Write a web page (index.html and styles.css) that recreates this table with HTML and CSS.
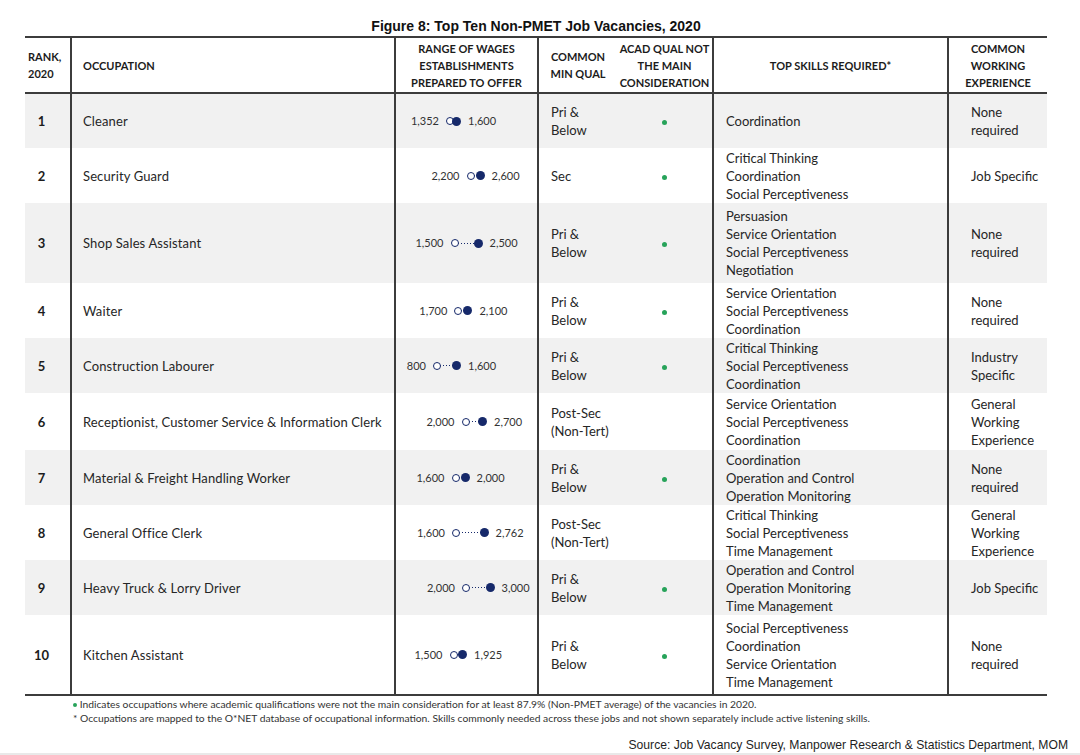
FILE: index.html
```html
<!DOCTYPE html>
<html lang="en">
<head>
<meta charset="utf-8">
<title>Figure 8: Top Ten Non-PMET Job Vacancies, 2020</title>
<link rel="stylesheet" href="styles.css">
</head>
<body>
<div class="page">
  <div class="title">Figure 8: Top Ten Non-PMET Job Vacancies, 2020</div>
  <table class="jobs">
    <colgroup>
      <col class="c-rank"><col class="c-occ"><col class="c-wage"><col class="c-minq"><col class="c-acad"><col class="c-skill"><col class="c-exp">
    </colgroup>
    <thead>
      <tr class="hrow">
        <th class="h-rank">RANK,<br>2020</th>
        <th class="h-occ bl">OCCUPATION</th>
        <th class="h-c bl">RANGE OF WAGES<br>ESTABLISHMENTS<br>PREPARED TO OFFER</th>
        <th class="h-c bl">COMMON<br>MIN QUAL</th>
        <th class="h-c">ACAD QUAL NOT<br>THE MAIN<br>CONSIDERATION</th>
        <th class="h-c bl">TOP SKILLS REQUIRED*</th>
        <th class="h-c bl">COMMON<br>WORKING<br>EXPERIENCE</th>
      </tr>
    </thead>
    <tbody>
      <tr class="shade h54">
        <td class="rank">1</td>
        <td class="occ bl">Cleaner</td>
        <td class="wage bl"><div class="dumb"><span class="lo" style="width:54px">1,352</span><span class="seg" style="width:6.5px"></span><span class="hi">1,600</span></div></td>
        <td class="minq bl">Pri &amp;<br>Below</td>
        <td class="acad"><span class="ok"></span></td>
        <td class="skill bl">Coordination</td>
        <td class="exp bl">None<br>required</td>
      </tr>
      <tr class="h55">
        <td class="rank">2</td>
        <td class="occ bl">Security Guard</td>
        <td class="wage bl"><div class="dumb"><span class="lo" style="width:74.5px">2,200</span><span class="seg" style="width:9.5px"></span><span class="hi">2,600</span></div></td>
        <td class="minq bl">Sec</td>
        <td class="acad"><span class="ok"></span></td>
        <td class="skill bl">Critical Thinking<br>Coordination<br>Social Perceptiveness</td>
        <td class="exp bl">Job Specific</td>
      </tr>
      <tr class="shade h80">
        <td class="rank">3</td>
        <td class="occ bl">Shop Sales Assistant</td>
        <td class="wage bl"><div class="dumb"><span class="lo" style="width:58.5px">1,500</span><span class="seg" style="width:23.5px"></span><span class="hi">2,500</span></div></td>
        <td class="minq bl">Pri &amp;<br>Below</td>
        <td class="acad"><span class="ok"></span></td>
        <td class="skill bl">Persuasion<br>Service Orientation<br>Social Perceptiveness<br>Negotiation</td>
        <td class="exp bl">None<br>required</td>
      </tr>
      <tr class="h55">
        <td class="rank">4</td>
        <td class="occ bl">Waiter</td>
        <td class="wage bl"><div class="dumb"><span class="lo" style="width:62.4px">1,700</span><span class="seg" style="width:9.5px"></span><span class="hi">2,100</span></div></td>
        <td class="minq bl">Pri &amp;<br>Below</td>
        <td class="acad"><span class="ok"></span></td>
        <td class="skill bl">Service Orientation<br>Social Perceptiveness<br>Coordination</td>
        <td class="exp bl">None<br>required</td>
      </tr>
      <tr class="shade h55">
        <td class="rank">5</td>
        <td class="occ bl">Construction Labourer</td>
        <td class="wage bl"><div class="dumb"><span class="lo" style="width:41px">800</span><span class="seg" style="width:19.5px"></span><span class="hi">1,600</span></div></td>
        <td class="minq bl">Pri &amp;<br>Below</td>
        <td class="acad"><span class="ok"></span></td>
        <td class="skill bl">Critical Thinking<br>Social Perceptiveness<br>Coordination</td>
        <td class="exp bl">Industry<br>Specific</td>
      </tr>
      <tr class="h57">
        <td class="rank">6</td>
        <td class="occ bl">Receptionist, Customer Service &amp; Information Clerk</td>
        <td class="wage bl"><div class="dumb"><span class="lo" style="width:69.5px">2,000</span><span class="seg" style="width:17px"></span><span class="hi">2,700</span></div></td>
        <td class="minq bl">Post-Sec<br>(Non-Tert)</td>
        <td class="acad"></td>
        <td class="skill bl">Service Orientation<br>Social Perceptiveness<br>Coordination</td>
        <td class="exp bl">General<br>Working<br>Experience</td>
      </tr>
      <tr class="shade h55">
        <td class="rank">7</td>
        <td class="occ bl">Material &amp; Freight Handling Worker</td>
        <td class="wage bl"><div class="dumb"><span class="lo" style="width:59.5px">1,600</span><span class="seg" style="width:9.5px"></span><span class="hi">2,000</span></div></td>
        <td class="minq bl">Pri &amp;<br>Below</td>
        <td class="acad"><span class="ok"></span></td>
        <td class="skill bl">Coordination<br>Operation and Control<br>Operation Monitoring</td>
        <td class="exp bl">None<br>required</td>
      </tr>
      <tr class="h55">
        <td class="rank">8</td>
        <td class="occ bl">General Office Clerk</td>
        <td class="wage bl"><div class="dumb"><span class="lo" style="width:60px">1,600</span><span class="seg" style="width:28px"></span><span class="hi">2,762</span></div></td>
        <td class="minq bl">Post-Sec<br>(Non-Tert)</td>
        <td class="acad"></td>
        <td class="skill bl">Critical Thinking<br>Social Perceptiveness<br>Time Management</td>
        <td class="exp bl">General<br>Working<br>Experience</td>
      </tr>
      <tr class="shade h55">
        <td class="rank">9</td>
        <td class="occ bl">Heavy Truck &amp; Lorry Driver</td>
        <td class="wage bl"><div class="dumb"><span class="lo" style="width:70px">2,000</span><span class="seg" style="width:24px"></span><span class="hi">3,000</span></div></td>
        <td class="minq bl">Pri &amp;<br>Below</td>
        <td class="acad"><span class="ok"></span></td>
        <td class="skill bl">Operation and Control<br>Operation Monitoring<br>Time Management</td>
        <td class="exp bl">Job Specific</td>
      </tr>
      <tr class="h81 last">
        <td class="rank">10</td>
        <td class="occ bl">Kitchen Assistant</td>
        <td class="wage bl"><div class="dumb"><span class="lo" style="width:57.5px">1,500</span><span class="seg" style="width:9px"></span><span class="hi">1,925</span></div></td>
        <td class="minq bl">Pri &amp;<br>Below</td>
        <td class="acad"><span class="ok"></span></td>
        <td class="skill bl">Social Perceptiveness<br>Coordination<br>Service Orientation<br>Time Management</td>
        <td class="exp bl">None<br>required</td>
      </tr>
    </tbody>
  </table>
  <div class="notes">
    <p class="note"><span class="ok small"></span> Indicates occupations where academic qualifications were not the main consideration for at least 87.9% (Non-PMET average) of the vacancies in 2020.</p>
    <p class="note">* Occupations are mapped to the O*NET database of occupational information. Skills commonly needed across these jobs and not shown separately include active listening skills.</p>
  </div>
  <div class="source">Source: Job Vacancy Survey, Manpower Research &amp; Statistics Department, MOM</div>
</div>
<div class="edge"></div>
</body>
</html>
```

FILE: styles.css
```css
html, body {
  margin: 0;
  padding: 0;
  background: #ffffff;
}

body {
  font-family: Lato, "Open Sans", "Noto Sans", sans-serif;
  color: #262626;
  width: 1080px;
  height: 755px;
  overflow: hidden;
  position: relative;
}

.page {
  padding: 18px 0 0 25px;
}

.title {
  width: 1022px;
  height: 16px;
  margin-bottom: 2px;
  text-align: center;
  font-family: "Liberation Sans", Arial, sans-serif;
  font-weight: 700;
  font-size: 14px;
  line-height: 16px;
  color: #111111;
}

.jobs {
  width: 1022px;
  table-layout: fixed;
  border-collapse: separate;
  border-spacing: 0;
}

.c-rank { width: 45px; }
.c-occ { width: 324px; }
.c-wage { width: 143px; }
.c-minq { width: 80px; }
.c-acad { width: 95px; }
.c-skill { width: 235px; }
.c-exp { width: 100px; }

.jobs th,
.jobs td {
  box-sizing: border-box;
  padding: 0;
  vertical-align: middle;
}

.jobs th {
  border-top: 2px solid #3c3c3c;
  border-bottom: 2px solid #3c3c3c;
  font-weight: 700;
  font-size: 11px;
  line-height: 17px;
  color: #1c1c1c;
  white-space: nowrap;
}

.jobs .bl {
  border-left: 2px solid #3c3c3c;
}

.hrow { height: 58px; }
.h54 { height: 54px; }
.h55 { height: 55px; }
.h57 { height: 57px; }
.h80 { height: 80px; }
.h81 { height: 81px; }

.last td {
  border-bottom: 2px solid #3c3c3c;
}

.shade td {
  background: #f1f1f1;
}

.h-rank {
  text-align: left;
  padding-left: 3px !important;
}

.h-occ {
  text-align: left;
  padding-left: 11px !important;
}

.h-c {
  text-align: center;
}

.jobs td {
  font-size: 13px;
  line-height: 18px;
}

.rank {
  text-align: center;
  padding-right: 12px !important;
  font-weight: 700;
  font-size: 11.5px;
  color: #1c1c1c;
}

.occ {
  padding-left: 11px !important;
  letter-spacing: 0.12px;
}

.minq {
  padding-left: 12px !important;
}

.acad {
  text-align: center;
}

.skill {
  padding-left: 12px !important;
}

.exp {
  padding-left: 22px !important;
}

.ok {
  display: inline-block;
  width: 5px;
  height: 5px;
  border-radius: 50%;
  background: #27a35a;
  vertical-align: middle;
}

/* dumbbell */
.dumb {
  display: flex;
  align-items: center;
  font-size: 11px;
  line-height: 14px;
  color: #333333;
}

.lo {
  flex: none;
  box-sizing: border-box;
  text-align: right;
  padding-right: 11px;
}

.seg {
  flex: none;
  position: relative;
  height: 9px;
  background-image: repeating-linear-gradient(90deg, #16296a 0 1px, transparent 1px 3px);
  background-size: 100% 1px;
  background-position: 0 4px;
  background-repeat: no-repeat;
}

.seg::before {
  content: "";
  position: absolute;
  left: -4px;
  top: 0.5px;
  width: 8px;
  height: 8px;
  box-sizing: border-box;
  border: 1.5px solid #16296a;
  border-radius: 50%;
  background: #ffffff;
}

.seg::after {
  content: "";
  position: absolute;
  right: -4.5px;
  top: 0;
  width: 9px;
  height: 9px;
  border-radius: 50%;
  background: #16296a;
}

.hi {
  flex: none;
  padding-left: 11.5px;
}

/* notes */
.notes {
  padding-left: 48px;
  padding-top: 1px;
}

.note {
  margin: 0;
  font-size: 10.3px;
  line-height: 14px;
  color: #333333;
  white-space: nowrap;
}

.ok.small {
  width: 4px;
  height: 4px;
  vertical-align: 1px;
}

.source {
  width: 1043px;
  margin-top: 13px;
  text-align: right;
  font-family: "Liberation Sans", Arial, sans-serif;
  font-size: 12.15px;
  line-height: 14px;
  color: #1e1e1e;
}

.edge {
  position: absolute;
  left: 0;
  right: 0;
  bottom: 0;
  height: 2px;
  background: #e9e9e9;
}
```
